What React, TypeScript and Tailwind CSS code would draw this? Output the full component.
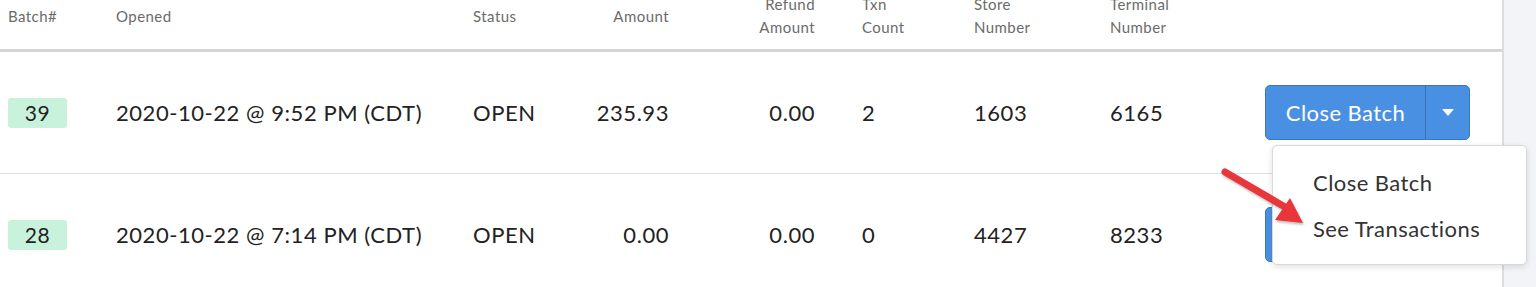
import React from "react";

const cols = "grid grid-cols-[116px_357px_100px_96px_193px_112px_136px_155px_237px]";

const Header = () => (
  <div className="h-[49px] overflow-hidden border-b-[3px] border-[#d4d4d4] box-content">
    <div className={`${cols} -mt-[8px] h-[48px] grid-rows-[48px] items-center text-[15px] leading-[23px] tracking-[0.03em] text-[#6b6b6b]`}>
      <div className="pl-2">Batch#</div>
      <div>Opened</div>
      <div>Status</div>
      <div className="text-right">Amount</div>
      <div className="text-right pr-[47px]">
        Refund
        <br />
        Amount
      </div>
      <div>
        Txn
        <br />
        Count
      </div>
      <div>
        Store
        <br />
        Number
      </div>
      <div>
        Terminal
        <br />
        Number
      </div>
      <div />
    </div>
  </div>
);

const SplitButton = () => (
  <div className="flex h-[55px] w-[205px] rounded-[5px] border border-[#3a77c2] bg-[#4a90e2] text-white">
    <div className="flex flex-1 items-center justify-center text-[22px] tracking-[0.02em]">Close Batch</div>
    <div className="flex w-[44px] items-center justify-center border-l border-[#3a70b4]">
      <svg width="12" height="7" viewBox="0 0 12 7">
        <path d="M0 0h12L6 7z" fill="white" />
      </svg>
    </div>
  </div>
);

type Batch = {
  id: string;
  opened: string;
  amount: string;
  refund: string;
  count: string;
  store: string;
  terminal: string;
};

const rows: Batch[] = [
  { id: "39", opened: "2020-10-22 @ 9:52 PM (CDT)", amount: "235.93", refund: "0.00", count: "2", store: "1603", terminal: "6165" },
  { id: "28", opened: "2020-10-22 @ 7:14 PM (CDT)", amount: "0.00", refund: "0.00", count: "0", store: "4427", terminal: "8233" },
];

const Row = ({ b, last }: { b: Batch; last?: boolean }) => (
  <div
    className={`${cols} h-[121px] items-center text-[22px] tracking-[0.025em] text-[#222] ${
      last ? "" : "border-b border-[#dedede] box-content"
    }`}
  >
    <div className="pl-2">
      <span className="flex h-[30px] w-[59px] items-center justify-center rounded-[3px] bg-[#c8f2dc] text-[21px]">{b.id}</span>
    </div>
    <div>{b.opened}</div>
    <div>OPEN</div>
    <div className="text-right">{b.amount}</div>
    <div className="text-right pr-[47px]">{b.refund}</div>
    <div>{b.count}</div>
    <div>{b.store}</div>
    <div>{b.terminal}</div>
    <div>
      <SplitButton />
    </div>
  </div>
);

export default function App() {
  return (
    <div className="relative flex h-[287px] w-[1536px] overflow-hidden bg-white font-['Lato',sans-serif]">
      <div className="w-[1502px] shrink-0">
        <Header />
        {rows.map((b, i) => (
          <Row key={b.id} b={b} last={i === rows.length - 1} />
        ))}
      </div>
      <div className="flex-1 border-l-2 border-[#dcdcdc] bg-[#f3f4f8]" />

      {/* dropdown menu opened from the first row */}
      <div className="absolute left-[1272px] top-[145px] z-10 h-[120px] w-[255px] rounded-[5px] border border-[#d9d9d9] bg-white pt-[13px] text-[22px] tracking-[0.02em] text-[#333] shadow-[0_2px_6px_rgba(0,0,0,0.12)]">
        <div className="flex h-[46px] items-center pl-[40px]">Close Batch</div>
        <div className="flex h-[46px] items-center pl-[40px]">See Transactions</div>
      </div>

      <svg
        className="absolute left-[1215px] top-[162px] z-20"
        width="100"
        height="70"
        viewBox="0 0 100 70"
        style={{ filter: "drop-shadow(1px 2px 1px rgba(0,0,0,0.25))" }}
      >
        <line x1="10" y1="10" x2="70" y2="45" stroke="#e8363b" strokeWidth="7" strokeLinecap="round" />
        <path d="M88 61 L60 58 L75 36 Z" fill="#e8363b" />
      </svg>
    </div>
  );
}
